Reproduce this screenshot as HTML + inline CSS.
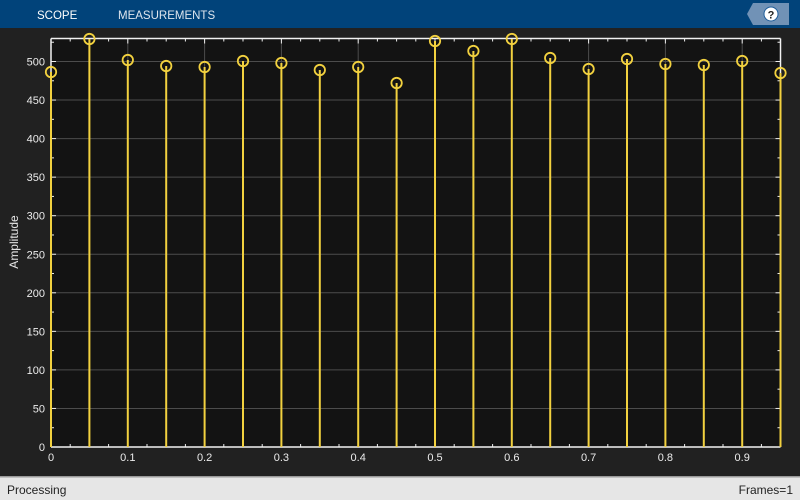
<!DOCTYPE html>
<html><head><meta charset="utf-8"><style>
html,body{margin:0;padding:0;width:800px;height:500px;overflow:hidden;background:#212121;font-family:"Liberation Sans",sans-serif}
</style></head><body>
<svg width="800" height="500" xmlns="http://www.w3.org/2000/svg" style="display:block">
<rect x="0" y="0" width="800" height="28" fill="#01437a"/>
<text x="37" y="19" fill="#fff" font-size="11.5" font-family="Liberation Sans">SCOPE</text>
<text x="118" y="19" fill="#dfe6ee" font-size="11.5" font-family="Liberation Sans">MEASUREMENTS</text>
<polygon points="747,14 753,3 789,3 789,25 753,25" fill="#7192b6"/>
<circle cx="771" cy="14" r="7" fill="#fff" stroke="#1f5d9a" stroke-width="1"/>
<text x="771" y="18.5" fill="#222" font-size="11" font-weight="bold" text-anchor="middle" font-family="Liberation Sans">?</text>
<rect x="0" y="28" width="800" height="449" fill="#212121"/>
<rect x="51" y="38.5" width="729.5" height="408.5" fill="#131313"/>
<g id="grid" stroke="#4c4c4c" stroke-width="1"></g>
<g id="axes"></g>
<g id="stems"></g>
<text transform="translate(18,242) rotate(-90)" fill="#e6e6e6" font-size="12" text-anchor="middle" font-family="Liberation Sans">Amplitude</text>
<rect x="0" y="477" width="800" height="23" fill="#e6e6e6"/>
<rect x="0" y="476" width="800" height="1.5" fill="#9a9a9a"/>
<text x="7" y="494" fill="#222" font-size="12" font-family="Liberation Sans">Processing</text>
<text x="793" y="494" fill="#222" font-size="12" text-anchor="end" font-family="Liberation Sans">Frames=1</text>
</svg>
<script>
var NS="http://www.w3.org/2000/svg";
function el(p,t,a,txt){var e=document.createElementNS(NS,t);for(var k in a)e.setAttribute(k,a[k]);if(txt!=null)e.textContent=txt;document.getElementById(p).appendChild(e);}
var L=51,R=780.5,T=38.5,B=447,sy=385.5/500,sx=768;
for(var v=0;v<=500;v+=50){var y=B-v*sy;if(v>0)el("grid","line",{x1:L,x2:R,y1:y,y2:y});
el("axes","text",{x:45,y:y+4,fill:"#ececec","font-size":"11","text-anchor":"end","font-family":"Liberation Sans"},v);
el("axes","line",{x1:L,x2:L+5,y1:y,y2:y,stroke:"#eee"});el("axes","line",{x1:R-5,x2:R,y1:y,y2:y,stroke:"#eee"});}
for(var v=25;v<530;v+=50){var y=B-v*sy;el("axes","line",{x1:L,x2:L+3,y1:y,y2:y,stroke:"#eee"});el("axes","line",{x1:R-3,x2:R,y1:y,y2:y,stroke:"#eee"});}
for(var i=0;i<=9;i++){var x=L+i*0.1*sx;if(i>0)el("grid","line",{x1:x,x2:x,y1:T,y2:B});
el("axes","text",{x:x,y:461,fill:"#ececec","font-size":"11","text-anchor":"middle","font-family":"Liberation Sans"},i==0?"0":"0."+i);
el("axes","line",{x1:x,x2:x,y1:B-5,y2:B,stroke:"#eee"});el("axes","line",{x1:x,x2:x,y1:T,y2:T+5,stroke:"#eee"});}
for(var i=1;i<38;i++){if(i%4==0)continue;var x=L+i*0.025*sx;el("axes","line",{x1:x,x2:x,y1:B-3,y2:B,stroke:"#eee"});el("axes","line",{x1:x,x2:x,y1:T,y2:T+3,stroke:"#eee"});}
el("axes","line",{x1:L,x2:R,y1:B,y2:B,stroke:"#f2f2f2","stroke-width":1.5});
el("axes","line",{x1:L,x2:R,y1:T,y2:T,stroke:"#f2f2f2","stroke-width":1.5});
el("axes","line",{x1:L,x2:L,y1:T,y2:B,stroke:"#f2f2f2","stroke-width":1.5});
el("axes","line",{x1:R,x2:R,y1:T,y2:B,stroke:"#f2f2f2","stroke-width":1.5});
var ys=[72,39,60,66,67,61,63,70,67,83,41,51,39,58,69,59,64,65,61,73];
for(var i=0;i<20;i++){var x=L+i*0.05*sx;if(i==19)x=R;
el("stems","line",{x1:x,x2:x,y1:ys[i],y2:B,stroke:"#f2d13f","stroke-width":2});
el("stems","circle",{cx:x,cy:ys[i],r:5.2,fill:"none",stroke:"#f2d13f","stroke-width":1.8});}
</script>
</body></html>
